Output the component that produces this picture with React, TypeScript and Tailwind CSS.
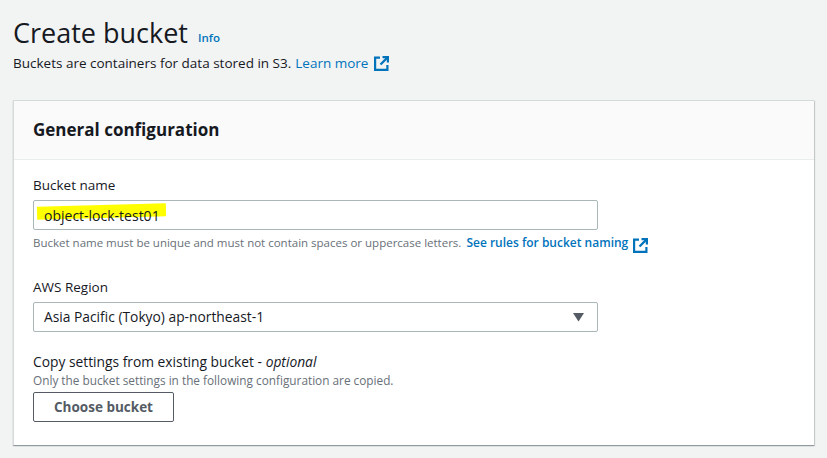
function ExternalIcon() {
  return (
    <svg width="15" height="15" viewBox="0 0 15 15" fill="none" stroke="#0073bb" strokeWidth="2.2" className="block shrink-0">
      <path d="M6 1.6H1.1V13.9H13.4V9" />
      <path d="M8.5 1.1H13.9V6.5" />
      <path d="M13.6 1.4L6.5 8.5" />
    </svg>
  );
}

export default function App() {
  return (
    <div className="h-[458px] w-[827px] overflow-hidden bg-[#f2f3f3] font-['Open_Sans',sans-serif] text-[#16191f]">
      <div className="pl-[13px] pr-[13px] pt-[12px]">
        <div className="flex items-baseline">
          <h1 className="text-[27px] leading-[42px] font-normal">Create bucket</h1>
          <a className="ml-[10px] -translate-y-px text-[11.5px] font-semibold text-[#0073bb]">Info</a>
        </div>
        <div className="-mt-px flex h-[20px] items-center text-[13.5px]">
          <span>Buckets are containers for data stored in S3.</span>
          <a className="ml-1 text-[#0073bb]">Learn more</a>
          <span className="ml-[6px]"><ExternalIcon /></span>
        </div>
        <section className="mt-[27px] h-[345px] w-[801px] border-t border-l border-[#d5dbdb] bg-white shadow-[0_1px_1px_0_rgba(0,28,36,0.3),1px_1px_1px_0_rgba(0,28,36,0.15)]">
          <div className="flex h-[59px] items-center border-b border-[#eaeded] bg-[#fafafa] pl-[19px]">
            <h2 className="text-[17px] font-bold">General configuration</h2>
          </div>
          <div className="pl-[19px] pt-[15px]">
            <label className="block text-[13.5px] leading-[20px]">Bucket name</label>
            <div className="mt-[5px] flex h-[30px] w-[565px] items-center rounded-[2px] border border-[#aab7b8] pl-[10px] text-[14px]">
              <span className="relative">
                <span className="absolute left-[-7px] top-[0px] h-[13px] w-[129px] -rotate-[1.5deg] bg-[#ffff00]" />
                <span className="relative">object-lock-test01</span>
              </span>
            </div>
            <div className="mt-[4px] flex h-[18px] items-center text-[11.5px] text-[#687078]">
              <span>Bucket name must be unique and must not contain spaces or uppercase letters.</span>
              <a className="ml-[5px] text-[12px] font-semibold text-[#0073bb]">See rules for bucket naming</a>
              <span className="ml-[5px] mt-[4px]"><ExternalIcon /></span>
            </div>
            <label className="mt-[25px] block text-[13.5px] leading-[20px]">AWS Region</label>
            <div className="mt-[5px] flex h-[30px] w-[565px] items-center justify-between rounded-[2px] border border-[#aab7b8] pl-[10px] pr-[13px] text-[13.8px]">
              <span>Asia Pacific (Tokyo) ap-northeast-1</span>
              <svg width="11" height="9" viewBox="0 0 11 9"><path d="M0 0H11L5.5 8.5Z" fill="#545b64" /></svg>
            </div>
            <div className="mt-[21px] text-[13.8px] leading-[18px]">
              Copy settings from existing bucket - <em>optional</em>
            </div>
            <div className="mt-[1px] text-[11.8px] leading-[16px] text-[#687078]">Only the bucket settings in the following configuration are copied.</div>
            <button className="mt-[4px] h-[30px] w-[141px] rounded-[2px] border border-[#545b64] bg-white text-[13.5px] font-bold text-[#545b64]">Choose bucket</button>
          </div>
        </section>
      </div>
    </div>
  );
}
